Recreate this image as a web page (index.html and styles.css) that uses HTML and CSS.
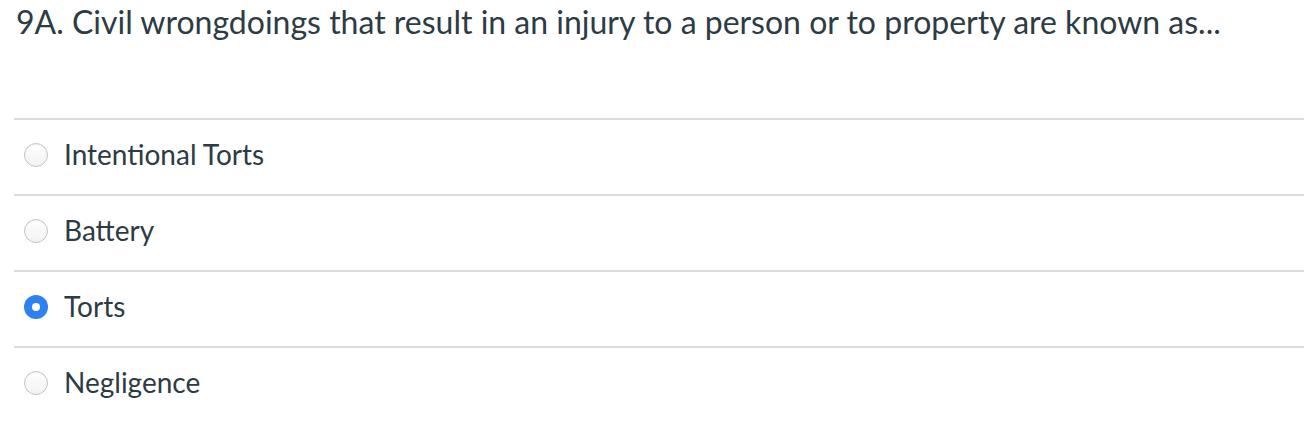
FILE: index.html
```html
<!DOCTYPE html>
<html>
<head>
<meta charset="utf-8">
<link rel="stylesheet" href="styles.css">
</head>
<body>
<div class="question">
  <h2 class="question-text">9A. Civil wrongdoings that result in an injury to a person or to property are known as...</h2>
  <div class="answers">
    <label class="answer"><span class="radio"></span><span class="answer-text">Intentional Torts</span></label>
    <label class="answer"><span class="radio"></span><span class="answer-text">Battery</span></label>
    <label class="answer"><span class="radio checked"></span><span class="answer-text">Torts</span></label>
    <label class="answer"><span class="radio"></span><span class="answer-text">Negligence</span></label>
  </div>
</div>
</body>
</html>
```

FILE: styles.css
```css
html, body {
  margin: 0;
  padding: 0;
  background: #fff;
}
body {
  font-family: Lato, "Liberation Sans", sans-serif;
  color: #2d3b45;
}
.question {
  padding: 0 0 0 14px;
}
.question-text {
  margin: 0;
  padding: 2px 0 0 2px;
  font-size: 32px;
  font-weight: 400;
  line-height: 40px;
  height: 118px;
  box-sizing: border-box;
}
.answers {
  display: flex;
  flex-direction: column;
}
.answer {
  display: flex;
  align-items: center;
  height: 76px;
  border-top: 2px solid #dcdcdc;
  box-sizing: border-box;
  padding: 0 0 7px 10px;
  gap: 16px;
}
.radio {
  width: 24px;
  height: 24px;
  border-radius: 50%;
  box-sizing: border-box;
  border: 1px solid #c4c4c4;
  background: linear-gradient(#fff, #f2f2f2);
  box-shadow: inset 0 1px 1px rgba(0,0,0,0.05);
  position: relative;
  top: 1px;
}
.radio.checked {
  border: none;
  background: #2f80f0;
  box-shadow: none;
}
.radio.checked::after {
  content: "";
  position: absolute;
  left: 8px;
  top: 8px;
  width: 8px;
  height: 8px;
  border-radius: 50%;
  background: #fff;
}
.answer-text {
  font-size: 28px;
  line-height: 34px;
}
```
